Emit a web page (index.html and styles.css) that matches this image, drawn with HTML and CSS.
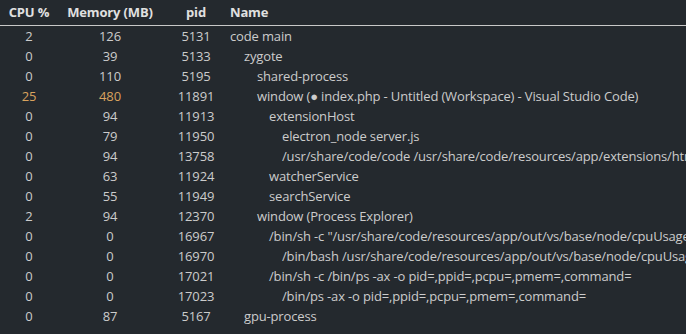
FILE: index.html
```html
<!DOCTYPE html>
<html lang="en">
<head>
<meta charset="UTF-8">
<title>Process Explorer</title>
<link rel="stylesheet" href="styles.css">
</head>
<body>
    <div class="explorer">
        <div class="row head">
            <div class="cell">CPU %</div>
            <div class="cell">Memory (MB)</div>
            <div class="cell">pid</div>
            <div class="cell name">Name</div>
        </div>
        <div class="row">
            <div class="cell">2</div><div class="cell">126</div><div class="cell">5131</div>
            <div class="cell name d0">code main</div>
        </div>
        <div class="row">
            <div class="cell">0</div><div class="cell">39</div><div class="cell">5133</div>
            <div class="cell name d1">zygote</div>
        </div>
        <div class="row">
            <div class="cell">0</div><div class="cell">110</div><div class="cell">5195</div>
            <div class="cell name d2">shared-process</div>
        </div>
        <div class="row">
            <div class="cell busy">25</div><div class="cell busy">480</div><div class="cell">11891</div>
            <div class="cell name d2">window (● index.php - Untitled (Workspace) - Visual Studio Code)</div>
        </div>
        <div class="row">
            <div class="cell">0</div><div class="cell">94</div><div class="cell">11913</div>
            <div class="cell name d3">extensionHost</div>
        </div>
        <div class="row">
            <div class="cell">0</div><div class="cell">79</div><div class="cell">11950</div>
            <div class="cell name d4">electron_node server.js</div>
        </div>
        <div class="row">
            <div class="cell">0</div><div class="cell">94</div><div class="cell">13758</div>
            <div class="cell name d4">/usr/share/code/code /usr/share/code/resources/app/extensions/html-language-features/server/dist/htmlServerMain.js</div>
        </div>
        <div class="row">
            <div class="cell">0</div><div class="cell">63</div><div class="cell">11924</div>
            <div class="cell name d3">watcherService</div>
        </div>
        <div class="row">
            <div class="cell">0</div><div class="cell">55</div><div class="cell">11949</div>
            <div class="cell name d3">searchService</div>
        </div>
        <div class="row">
            <div class="cell">2</div><div class="cell">94</div><div class="cell">12370</div>
            <div class="cell name d2">window (Process Explorer)</div>
        </div>
        <div class="row">
            <div class="cell">0</div><div class="cell">0</div><div class="cell">16967</div>
            <div class="cell name d3">/bin/sh -c "/usr/share/code/resources/app/out/vs/base/node/cpuUsage.sh" 11891</div>
        </div>
        <div class="row">
            <div class="cell">0</div><div class="cell">0</div><div class="cell">16970</div>
            <div class="cell name d4">/bin/bash /usr/share/code/resources/app/out/vs/base/node/cpuUsage.sh 11891</div>
        </div>
        <div class="row">
            <div class="cell">0</div><div class="cell">0</div><div class="cell">17021</div>
            <div class="cell name d3">/bin/sh -c /bin/ps -ax -o pid=,ppid=,pcpu=,pmem=,command=</div>
        </div>
        <div class="row">
            <div class="cell">0</div><div class="cell">0</div><div class="cell">17023</div>
            <div class="cell name d4">/bin/ps -ax -o pid=,ppid=,pcpu=,pmem=,command=</div>
        </div>
        <div class="row">
            <div class="cell">0</div><div class="cell">87</div><div class="cell">5167</div>
            <div class="cell name d1">gpu-process</div>
        </div>
    </div>
</body>
</html>
```

FILE: styles.css
```css
body {
    margin: 0;
    background-color: #24292e;
    color: #cccccc;
    font-family: "Open Sans", sans-serif;
    font-size: 13px;
    letter-spacing: -0.15px;
    overflow: hidden;
}

.explorer {
    width: 686px;
    overflow: hidden;
}

.row {
    display: grid;
    grid-template-columns: 58px 104px 68px 1fr;
    height: 20px;
    line-height: 20px;
}

.row.head {
    height: 25px;
    line-height: 24px;
    font-weight: bold;
    color: #e0e0e0;
    border-bottom: 1px solid #c8c8c8;
}

.cell {
    text-align: center;
    white-space: nowrap;
}

.cell.name {
    text-align: left;
    overflow: hidden;
}

.cell.busy {
    color: #d9a35e;
}

.d1 { padding-left: 14px; }
.d2 { padding-left: 27px; }
.d3 { padding-left: 39px; }
.d4 { padding-left: 52px; }
```
